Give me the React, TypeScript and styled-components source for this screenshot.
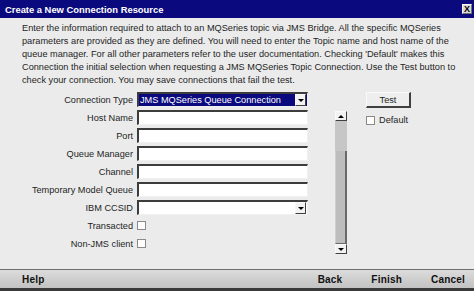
import React from "react";
import styled, { createGlobalStyle } from "styled-components";

const GlobalStyle = createGlobalStyle`
  html, body { margin: 0; padding: 0; background: #ebebeb; }
  body { font-family: "Liberation Sans", Arial, sans-serif; }
  * { box-sizing: border-box; }
`;

const Window = styled.div`
  width: 474px;
  height: 291px;
  display: flex;
  flex-direction: column;
  background: #ebebeb;
  color: #1e1e1e;
  overflow: hidden;
`;

const TitleBar = styled.div`
  height: 18px;
  flex: none;
  background: #0a0a7e;
  display: flex;
  align-items: center;
  justify-content: space-between;
  padding: 0 2px 0 5px;
`;

const Title = styled.span`
  color: #fff;
  font-weight: bold;
  font-size: 9.4px;
`;

const CloseButton = styled.div`
  width: 10px;
  height: 10px;
  background: #d8d8d8;
  border: 1px solid #f4f4f4;
  border-right-color: #707070;
  border-bottom-color: #707070;
  color: #000;
  font-weight: bold;
  font-size: 9px;
  line-height: 8px;
  text-align: center;
`;

const Intro = styled.p`
  margin: 0;
  padding: 4px 18px 0 22px;
  font-size: 9.2px;
  line-height: 13px;
`;

const FormArea = styled.div`
  display: flex;
  align-items: flex-start;
  margin-top: 5px;
`;

const FieldGrid = styled.div`
  display: grid;
  grid-template-columns: 133px 171px;
  column-gap: 4px;
  row-gap: 3px;
  grid-auto-rows: 15px;
`;

const Label = styled.span`
  font-size: 9.2px;
  text-align: right;
  align-self: center;
  white-space: nowrap;
`;

const TextInput = styled.div`
  background: #fff;
  border-top: 2px solid #3c3c3c;
  border-left: 2px solid #3c3c3c;
  border-bottom: 1px solid #f0f0f0;
  border-right: 1px solid #f0f0f0;
`;

const Select = styled.div<{ $selected?: boolean }>`
  display: flex;
  align-items: center;
  justify-content: space-between;
  background: ${(p) => (p.$selected ? "#0a0a7e" : "#fff")};
  color: ${(p) => (p.$selected ? "#fff" : "#000")};
  border-top: 2px solid #3c3c3c;
  border-left: 2px solid #3c3c3c;
  border-bottom: 1px solid #f0f0f0;
  border-right: 1px solid #f0f0f0;
  font-size: 9.2px;
  padding-left: 1px;
  overflow: hidden;
`;

const ArrowButton = styled.div`
  width: 11px;
  height: 12px;
  margin-right: 1px;
  background: #f2f2f2;
  border: 1px solid #f8f8f8;
  border-right-color: #404040;
  border-bottom-color: #404040;
  display: flex;
  align-items: center;
  justify-content: center;
`;

const DownTriangle = styled.span`
  width: 0;
  height: 0;
  border-left: 3px solid transparent;
  border-right: 3px solid transparent;
  border-top: 3px solid #000;
`;

const UpTriangle = styled.span`
  width: 0;
  height: 0;
  border-left: 3px solid transparent;
  border-right: 3px solid transparent;
  border-bottom: 3px solid #000;
`;

const CheckCell = styled.div`
  display: flex;
  align-items: center;
`;

const CheckBox = styled.span`
  width: 9px;
  height: 9px;
  background: #fff;
  border: 1px solid #8a8a8a;
  display: inline-block;
  flex: none;
`;

const ScrollBar = styled.div`
  margin-left: 27px;
  margin-top: 19px;
  width: 12px;
  height: 143px;
  display: flex;
  flex-direction: column;
  background: #cfcfcf;
`;

const ScrollArrow = styled.div`
  height: 10px;
  flex: none;
  background: #f2f2f2;
  border: 1px solid #fafafa;
  border-right-color: #404040;
  border-bottom-color: #404040;
  display: flex;
  align-items: center;
  justify-content: center;
`;

const ScrollTrack = styled.div`
  flex: 1;
  display: flex;
  flex-direction: column;
  background: #c6c6c6;
`;

const ScrollThumb = styled.div`
  margin-top: 30px;
  flex: 1;
  background: #bdbdbd;
  border-left: 1px solid #cfcfcf;
  border-right: 2px solid #6a6a6a;
  border-bottom: 1px solid #6a6a6a;
`;

const Side = styled.div`
  margin-left: 19px;
  display: flex;
  flex-direction: column;
  gap: 7px;
`;

const Button = styled.div`
  width: 45px;
  height: 16px;
  background: #eeeeee;
  border: 1px solid #fafafa;
  border-right: 2px solid #404040;
  border-bottom: 2px solid #404040;
  font-size: 9.2px;
  display: flex;
  align-items: center;
  justify-content: center;
`;

const CheckRow = styled.label`
  display: flex;
  align-items: center;
  gap: 4px;
  font-size: 9.2px;
`;

const Footer = styled.div`
  margin-top: auto;
  flex: none;
  height: 22px;
  border-top: 1px solid #6e6e6e;
  border-bottom: 3px solid #3a3a3a;
  background: linear-gradient(#dcdcdc, #c2c2c2);
  display: flex;
  align-items: center;
  justify-content: space-between;
  padding: 0 9px 0 22px;
  font-size: 10px;
  font-weight: bold;
  color: #111;
`;

const FooterGroup = styled.div`
  display: flex;
  gap: 29px;
`;

const FooterAction = styled.span`
  letter-spacing: 0.2px;
`;

const fields: { label: string; kind: "select" | "input" | "check"; selected?: string }[] = [
  { label: "Connection Type", kind: "select", selected: "JMS MQSeries Queue Connection" },
  { label: "Host Name", kind: "input" },
  { label: "Port", kind: "input" },
  { label: "Queue Manager", kind: "input" },
  { label: "Channel", kind: "input" },
  { label: "Temporary Model Queue", kind: "input" },
  { label: "IBM CCSID", kind: "select" },
  { label: "Transacted", kind: "check" },
  { label: "Non-JMS client", kind: "check" },
];

export default function App() {
  return (
    <>
      <GlobalStyle />
      <Window>
        <TitleBar>
          <Title>Create a New Connection Resource</Title>
          <CloseButton>X</CloseButton>
        </TitleBar>
        <Intro>
          Enter the information required to attach to an MQSeries topic via JMS Bridge. All the specific MQSeries
          parameters are provided as they are defined. You will need to enter the Topic name and host name of the
          queue manager. For all other parameters refer to the user documentation. Checking 'Default' makes this
          Connection the initial selection when requesting a JMS MQSeries Topic Connection. Use the Test button to
          check your connection. You may save connections that fail the test.
        </Intro>
        <FormArea>
          <FieldGrid>
            {fields.map((f) => (
              <React.Fragment key={f.label}>
                <Label>{f.label}</Label>
                {f.kind === "input" && <TextInput />}
                {f.kind === "select" && (
                  <Select $selected={!!f.selected}>
                    <span>{f.selected ?? ""}</span>
                    <ArrowButton>
                      <DownTriangle />
                    </ArrowButton>
                  </Select>
                )}
                {f.kind === "check" && (
                  <CheckCell>
                    <CheckBox />
                  </CheckCell>
                )}
              </React.Fragment>
            ))}
          </FieldGrid>
          <ScrollBar>
            <ScrollArrow>
              <UpTriangle />
            </ScrollArrow>
            <ScrollTrack>
              <ScrollThumb />
            </ScrollTrack>
            <ScrollArrow>
              <DownTriangle />
            </ScrollArrow>
          </ScrollBar>
          <Side>
            <Button>Test</Button>
            <CheckRow>
              <CheckBox />
              Default
            </CheckRow>
          </Side>
        </FormArea>
        <Footer>
          <FooterAction>Help</FooterAction>
          <FooterGroup>
            <FooterAction>Back</FooterAction>
            <FooterAction>Finish</FooterAction>
            <FooterAction>Cancel</FooterAction>
          </FooterGroup>
        </Footer>
      </Window>
    </>
  );
}
